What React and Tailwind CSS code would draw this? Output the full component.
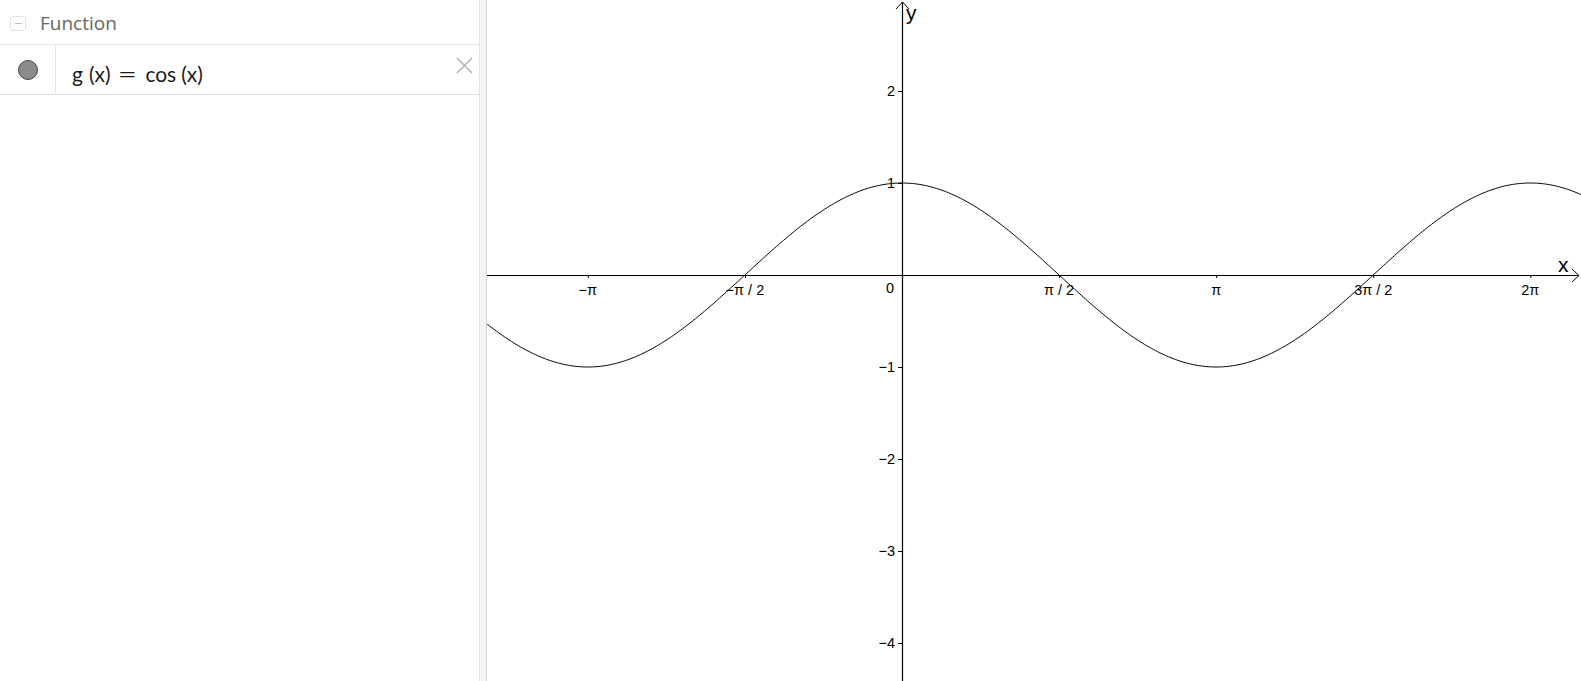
import React from "react";

// graph geometry (px, relative to the graph view)
const W = 1094;
const H = 681;
const OX = 415; // origin x
const OY = 275; // origin y
const SX = 100; // px per unit on x
const SY = 92; // px per unit on y

const toX = (v) => OX + v * SX;
const toY = (v) => OY - v * SY;

function cosPath() {
  const pts = [];
  const from = -OX / SX - 0.05;
  const to = (W - OX) / SX + 0.05;
  const n = 600;
  for (let i = 0; i <= n; i++) {
    const v = from + ((to - from) * i) / n;
    pts.push(`${i === 0 ? "M" : "L"}${toX(v).toFixed(2)},${toY(Math.cos(v)).toFixed(2)}`);
  }
  return pts.join(" ");
}

const xTicks = [
  { v: -Math.PI, label: "−π" },
  { v: -Math.PI / 2, label: "−π / 2" },
  { v: Math.PI / 2, label: "π / 2" },
  { v: Math.PI, label: "π" },
  { v: (3 * Math.PI) / 2, label: "3π / 2" },
  { v: 2 * Math.PI, label: "2π" },
];

const yTicks = [2, 1, -1, -2, -3, -4];

function Graph() {
  const font = { fontFamily: '"Liberation Sans", Arial, sans-serif' };
  return (
    <svg width={W} height={H} viewBox={`0 0 ${W} ${H}`} className="block">
      {/* axes */}
      <line x1="0" y1={OY + 0.5} x2={W - 2} y2={OY + 0.5} stroke="#000" strokeWidth="1.2" />
      <line x1={OX + 0.5} y1="2" x2={OX + 0.5} y2={H} stroke="#000" strokeWidth="1.2" />
      {/* arrows */}
      <path d={`M${W - 9},${OY - 6} L${W - 2},${OY + 0.5} L${W - 9},${OY + 7}`} fill="none" stroke="#000" strokeWidth="1" />
      <path d={`M${OX - 6},9 L${OX + 0.5},2 L${OX + 7},9`} fill="none" stroke="#000" strokeWidth="1" />
      {/* axis names */}
      <text x={W - 23} y={OY - 3} fontSize="21" style={font}>x</text>
      <text x={OX + 4} y="20" fontSize="21" style={font}>y</text>

      {xTicks.map((t) => (
        <g key={t.label}>
          <line x1={toX(t.v) + 0.5} y1={OY} x2={toX(t.v) + 0.5} y2={OY + 3} stroke="#000" />
          <text x={toX(t.v)} y={OY + 20} fontSize="14.5" textAnchor="middle" style={font}>
            {t.label}
          </text>
        </g>
      ))}
      <text x={OX - 8} y={OY + 18} fontSize="14.5" textAnchor="end" style={font}>0</text>

      {yTicks.map((v) => (
        <g key={v}>
          <line x1={OX - 4} y1={toY(v) + 0.5} x2={OX} y2={toY(v) + 0.5} stroke="#000" />
          <text x={OX - 7} y={toY(v) + 5} fontSize="14.5" textAnchor="end" style={font}>
            {v < 0 ? `−${-v}` : v}
          </text>
        </g>
      ))}

      <path d={cosPath()} fill="none" stroke="#000" strokeWidth="1" />
    </svg>
  );
}

export default function App() {
  return (
    <div
      className="flex h-[681px] w-[1581px] overflow-hidden bg-white"
      style={{ fontFamily: '"Open Sans", "Noto Sans", sans-serif' }}
    >
      {/* algebra view */}
      <div className="w-[479px] shrink-0 flex flex-col">
        <div className="h-[45px] flex items-center pt-[3px] border-b border-[#e6e6e6]">
          <div className="ml-[10px] w-[16px] h-[15px] border border-[#e3e3e3] rounded-[3px] flex items-center justify-center">
            <div className="w-[7px] h-px bg-[#bdbdbd]" />
          </div>
          <span className="ml-[14px] text-[19px] text-[#666666] leading-none">Function</span>
        </div>
        <div className="h-[50px] flex items-stretch border-b border-[#e0e0e0]">
          <div className="w-[56px] flex items-center justify-center border-r border-[#e3e3e3]">
            <div className="w-[20px] h-[20px] rounded-full bg-[#8c8c8c] border border-[#444]" />
          </div>
          <div className="flex-1 flex items-center pl-[16px] pt-[8px] text-[21px] text-[#1a1a1a]" style={{ fontFamily: '"Lato", "Open Sans", sans-serif' }}>
            <span>g</span>
            <span className="ml-[6px]">(x)</span>
            <span className="ml-[10px] text-[22px] inline-block scale-x-150">=</span>
            <span className="ml-[12px]">cos</span>
            <span className="ml-[5px]">(x)</span>
          </div>
          <div className="w-[30px] flex items-start justify-center pt-[12px]">
            <svg width="17" height="17" viewBox="0 0 17 17">
              <path d="M1,1 L16,16 M16,1 L1,16" stroke="#b5b5b5" strokeWidth="1.6" />
            </svg>
          </div>
        </div>
      </div>
      {/* splitter */}
      <div className="w-[8px] shrink-0 bg-[#f4f4f4] border-l border-[#e3e3e3] border-r border-r-[#d6d6d6]" />
      {/* graphics view */}
      <div className="flex-1 relative">
        <Graph />
      </div>
    </div>
  );
}
